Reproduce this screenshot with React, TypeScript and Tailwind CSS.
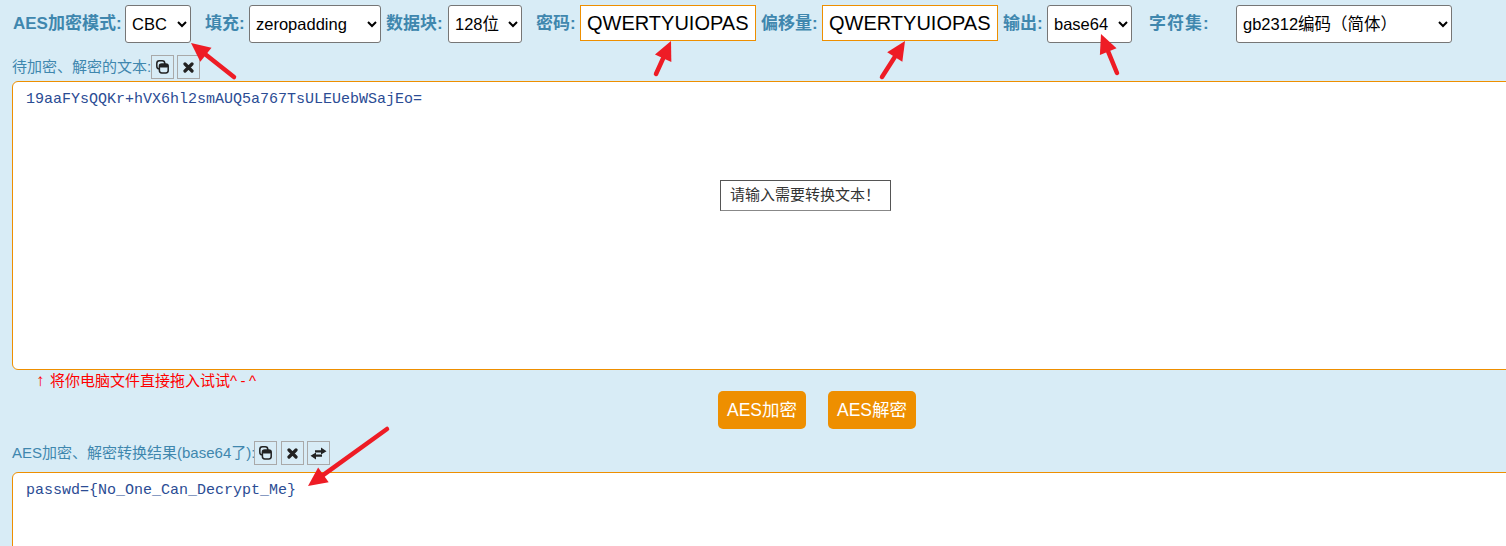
const font = "font-['Liberation_Sans','Noto_Sans_CJK_SC',sans-serif]";
const labelClass = 'text-[17px] font-bold text-[#3f87ae] whitespace-nowrap leading-[38px]';
const selectClass = 'h-[38px] rounded-[3px] border border-[#767676] bg-white pl-[2px] text-[16.5px] text-black outline-none';
const keyClass = 'h-[36px] w-[176px] border border-[#ee8f00] bg-white px-[6px] text-[20px] text-black outline-none';
const toolClass = 'flex h-[24px] w-[23px] items-center justify-center border border-[#a9a9a9] text-[#222]';
const areaClass = "w-[1520px] resize-none rounded-l-[6px] border border-[#ee8f00] bg-white pl-[13px] pt-[8px] font-['Liberation_Mono',monospace] text-[15px] leading-[20px] text-[#2b4c94] outline-none";

const CopyIcon = () => (
  <svg width="13" height="14" viewBox="0 0 13 14">
    <rect x="0.8" y="0.8" width="8" height="8" rx="2.6" fill="none" stroke="#222" strokeWidth="1.5" />
    <rect x="3.4" y="4" width="8.8" height="9" rx="2.4" fill="#d8ecf6" stroke="#222" strokeWidth="1.5" />
    <rect x="3.4" y="4" width="8.8" height="3.4" rx="1.2" fill="#222" />
  </svg>
);

const CloseIcon = () => (
  <svg width="11" height="11" viewBox="0 0 11 11">
    <path d="M2 2L9 9M9 2L2 9" stroke="#222" strokeWidth="3.2" strokeLinecap="round" />
  </svg>
);

const SwapIcon = () => (
  <svg width="17" height="13" viewBox="0 0 17 13">
    <path d="M5 3.2H11V0.5L16.5 4.2L11 7.5V5.6H5Z" fill="#222" />
    <path d="M12 9.8H6V12.5L0.5 8.8L6 5.5V7.4H12Z" fill="#222" />
  </svg>
);

const Arrow = ({ x1, y1, x2, y2 }: { x1: number; y1: number; x2: number; y2: number }) => {
  // arrow from tail (x1,y1) to head (x2,y2)
  const len = Math.hypot(x2 - x1, y2 - y1);
  const ux = (x2 - x1) / len;
  const uy = (y2 - y1) / len;
  const bx = x2 - ux * 19;
  const by = y2 - uy * 19;
  const nx = -uy * 9;
  const ny = ux * 9;
  return (
    <g fill="#ee1c25" stroke="#ee1c25">
      <line x1={x1} y1={y1} x2={bx} y2={by} strokeWidth="4.5" strokeLinecap="round" />
      <polygon points={`${x2},${y2} ${bx + nx},${by + ny} ${bx - nx},${by - ny}`} strokeWidth="0" />
    </g>
  );
};

const App = () => {
  return (
    <div className={`${font} relative h-[546px] w-[1506px] overflow-hidden bg-[#d8ecf6]`}>
      <div className="flex h-[48px] items-start pl-[13px] pt-[5px]">
        <span className={`${labelClass} w-[106px]`}>AES加密模式:</span>
        <select className={`${selectClass} ml-[6px] w-[66px]`} defaultValue="CBC">
          <option>CBC</option>
        </select>
        <span className={`${labelClass} ml-[14px] w-[39px]`}>填充:</span>
        <select className={`${selectClass} ml-[5px] w-[132px]`} defaultValue="zeropadding">
          <option>zeropadding</option>
        </select>
        <span className={`${labelClass} ml-[5px] w-[57px]`}>数据块:</span>
        <select className={`${selectClass} ml-[5px] w-[74px]`} defaultValue="128位">
          <option>128位</option>
        </select>
        <span className={`${labelClass} ml-[14px] w-[39px]`}>密码:</span>
        <input className={`${keyClass} ml-[5px]`} defaultValue="QWERTYUIOPAS" />
        <span className={`${labelClass} ml-[5px] w-[57px]`}>偏移量:</span>
        <input className={`${keyClass} ml-[4px]`} defaultValue="QWERTYUIOPAS" />
        <span className={`${labelClass} ml-[5px] w-[39px]`}>输出:</span>
        <select className={`${selectClass} ml-[5px] w-[85px]`} defaultValue="base64">
          <option>base64</option>
        </select>
        <span className={`${labelClass} ml-[17px] w-[70px] tracking-[1px]`}>字符集:</span>
        <select className={`${selectClass} ml-[17px] w-[216px]`} defaultValue="gb2312">
          <option value="gb2312">gb2312编码（简体）</option>
        </select>
      </div>

      <div className="mt-[7px] flex h-[24px] items-center pl-[12px] text-[15px] text-[#3f87ae]">
        <span>待加密、解密的文本:</span>
        <div className="flex gap-[3px]">
          <button className={toolClass}><CopyIcon /></button>
          <button className={toolClass}><CloseIcon /></button>
        </div>
      </div>

      <div className="pl-[12px] pt-[2px]">
        <textarea
          readOnly
          className={`${areaClass} block h-[289px]`}
          defaultValue="19aaFYsQQKr+hVX6hl2smAUQ5a767TsULEUebWSajEo="
        />
      </div>

      <p className="h-[21px] pl-[36px] text-[15px] leading-[21px] text-[#ff0000]">
        <span className="inline-block w-[14px] text-[17px] font-bold">↑</span>将你电脑文件直接拖入试试<span className="tracking-[3.5px]">^-^</span>
      </p>

      <div className="flex gap-[22px] pl-[718px]">
        <button className="h-[38px] w-[88px] rounded-[5px] bg-[#ee8f00] text-[17.5px] text-white">AES加密</button>
        <button className="h-[38px] w-[88px] rounded-[5px] bg-[#ee8f00] text-[17.5px] text-white">AES解密</button>
      </div>

      <div className="mt-[12px] flex h-[24px] items-center pl-[12px] text-[15px] text-[#3f87ae]">
        <span>AES加密、解密转换结果(base64了):</span>
        <div className="-ml-[1px] flex gap-[3px]">
          <button className={toolClass}><CopyIcon /></button>
          <button className={`${toolClass} ml-[1px]`}><CloseIcon /></button>
          <button className={toolClass}><SwapIcon /></button>
        </div>
      </div>

      <div className="pl-[12px] pt-[7px]">
        <textarea
          readOnly
          className={`${areaClass} block h-[200px]`}
          defaultValue="passwd={No_One_Can_Decrypt_Me}"
        />
      </div>

      {/* tooltip over the first text area */}
      <div className="absolute left-[720px] top-[180px] flex h-[31px] w-[171px] items-center border border-[#555] border-b-[#888] bg-white pl-[9px] text-[15px] text-[#333]">
        请输入需要转换文本！
      </div>

      {/* red annotation arrows drawn on the screenshot */}
      <svg className="pointer-events-none absolute left-0 top-0" width="1506" height="546">
        <Arrow x1={234} y1={77} x2={191} y2={43} />
        <Arrow x1={656} y1={74} x2={671} y2={41} />
        <Arrow x1={882} y1={77} x2={905} y2={41} />
        <Arrow x1={1117} y1={73} x2={1101} y2={34} />
        <Arrow x1={387} y1={429} x2={308} y2={486} />
      </svg>
    </div>
  );
};

export default App;
